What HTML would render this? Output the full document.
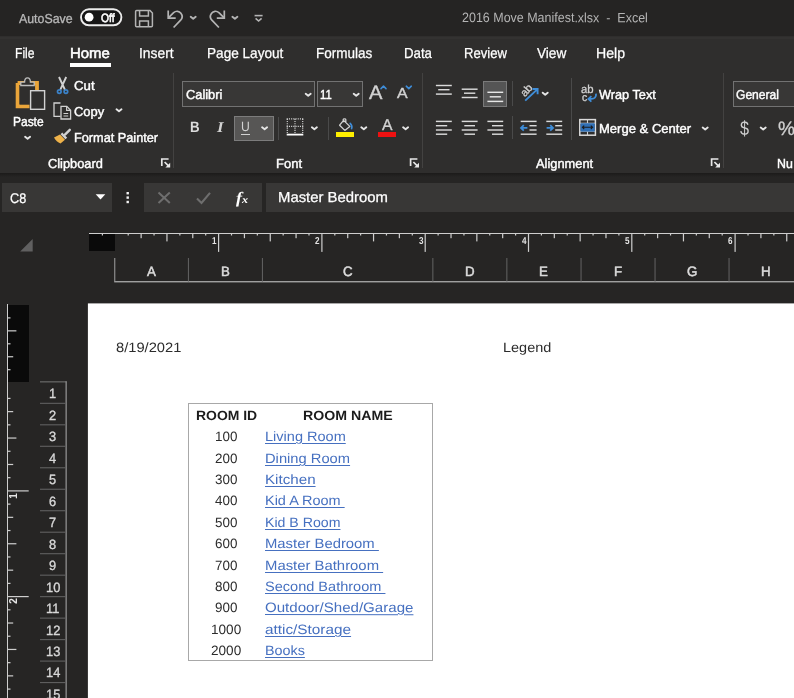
<!DOCTYPE html>
<html><head><meta charset="utf-8"><title>2016 Move Manifest.xlsx - Excel</title>
<style>
html,body{margin:0;padding:0;}
body{width:794px;height:698px;overflow:hidden;background:#262524;position:relative;font-family:"Liberation Sans",sans-serif;}
.t{position:absolute;white-space:pre;transform-origin:0 50%;}
.r{position:absolute;}
svg{position:absolute;left:0;top:0;overflow:visible;}
#app{position:absolute;left:0;top:0;width:794px;height:698px;overflow:hidden;will-change:transform;}
</style></head><body>
<div id="app">
<div class="r" style="left:0px;top:0px;width:794px;height:36px;background:#252423;"></div>
<div class="r" style="left:0px;top:36px;width:794px;height:137px;background:#2f2e2d;"></div>
<div class="r" style="left:0px;top:36.5px;width:794px;height:2px;background:#333231;"></div>
<div class="r" style="left:0px;top:172.5px;width:794px;height:526px;background:#262524;"></div>
<div class="r" style="left:0;top:172.5px;width:794px;height:4px;background:linear-gradient(#1c1b1a,#262524)"></div>
<span class="t" style="left:19.40px;top:9.50px;font-size:13px;line-height:17px;color:#b8b8b8;transform:scaleX(0.9508) rotate(0.06deg);-webkit-text-stroke:0.3px #b8b8b8;">AutoSave</span>
<svg width="794" height="698" viewBox="0 0 794 698"><rect x="81" y="9.3" width="40.4" height="16" rx="8" ry="8" fill="#161616" stroke="#ececec" stroke-width="1.9"/></svg>
<svg width="794" height="698" viewBox="0 0 794 698"><circle cx="89.1" cy="17.2" r="4.4" fill="#fff"/></svg>
<span class="t" style="left:101.00px;top:9.74px;font-size:12px;line-height:16px;color:#ffffff;transform:scaleX(0.8616) rotate(0.06deg);-webkit-text-stroke:0.6px #fff;">Off</span>
<span class="t" style="left:461.80px;top:8.92px;font-size:13.5px;line-height:18px;color:#b4b4b4;transform:scaleX(0.9245) rotate(0.06deg);">2016 Move Manifest.xlsx  -  Excel</span>
<svg width="794" height="698" viewBox="0 0 794 698"><g fill="none" stroke="#b4b4b4" stroke-width="1.5"><path d="M135.6 11.5 a1 1 0 0 1 1 -1 H150 L152.4 13 V25.8 a1 1 0 0 1 -1 1 H136.6 a1 1 0 0 1 -1 -1 Z"/><path d="M139.6 10.6 V16 H148.4 V10.6 M139.6 26.8 V21 H148.4 V26.8"/><path d="M168.2 10.6 V18.1 H175.7" stroke-width="1.7"/><path d="M168.6 17.6 L173.6 12.6 C176 10.6 179.2 10.9 180.9 13.2 C182.6 15.4 182.3 18.3 180.6 20.2 L173.6 27.5" stroke-width="1.7"/><path d="M224.3 10.6 V18.1 H216.8" stroke-width="1.7"/><path d="M223.9 17.6 L218.9 12.6 C216.5 10.6 213.3 10.9 211.6 13.2 C209.9 15.4 210.2 18.3 211.9 20.2 L218.9 27.5" stroke-width="1.7"/><path d="M254.6 15.6 H262.6" stroke-width="1.6"/><path d="M255.6 18.3 L258.6 21 L261.6 18.3" stroke-width="1.6"/></g></svg>
<span class="t" style="left:15.30px;top:44.08px;font-size:14.5px;line-height:19px;color:#ffffff;transform:scaleX(0.8346) rotate(0.06deg);-webkit-text-stroke:0.25px #fff;">File</span>
<span class="t" style="left:70.20px;top:44.08px;font-size:14.5px;line-height:19px;color:#ffffff;transform:scaleX(1.0290) rotate(0.06deg);-webkit-text-stroke:0.55px #fff;">Home</span>
<span class="t" style="left:139.20px;top:44.08px;font-size:14.5px;line-height:19px;color:#ffffff;transform:scaleX(0.9541) rotate(0.06deg);-webkit-text-stroke:0.25px #fff;">Insert</span>
<span class="t" style="left:207.10px;top:44.08px;font-size:14.5px;line-height:19px;color:#ffffff;transform:scaleX(0.9382) rotate(0.06deg);-webkit-text-stroke:0.25px #fff;">Page Layout</span>
<span class="t" style="left:315.90px;top:44.08px;font-size:14.5px;line-height:19px;color:#ffffff;transform:scaleX(0.9316) rotate(0.06deg);-webkit-text-stroke:0.25px #fff;">Formulas</span>
<span class="t" style="left:404.10px;top:44.08px;font-size:14.5px;line-height:19px;color:#ffffff;transform:scaleX(0.9142) rotate(0.06deg);-webkit-text-stroke:0.25px #fff;">Data</span>
<span class="t" style="left:464.30px;top:44.08px;font-size:14.5px;line-height:19px;color:#ffffff;transform:scaleX(0.9023) rotate(0.06deg);-webkit-text-stroke:0.25px #fff;">Review</span>
<span class="t" style="left:536.70px;top:44.08px;font-size:14.5px;line-height:19px;color:#ffffff;transform:scaleX(0.9401) rotate(0.06deg);-webkit-text-stroke:0.25px #fff;">View</span>
<span class="t" style="left:595.70px;top:44.08px;font-size:14.5px;line-height:19px;color:#ffffff;transform:scaleX(0.9724) rotate(0.06deg);-webkit-text-stroke:0.25px #fff;">Help</span>
<div class="r" style="left:70px;top:63px;width:41px;height:3.6px;background:#ffffff;"></div>
<span class="t" style="left:12.80px;top:113.00px;font-size:13px;line-height:17px;color:#ffffff;transform:scaleX(0.9205) rotate(0.06deg);-webkit-text-stroke:0.42px #fff;">Paste</span>
<span class="t" style="left:73.90px;top:77.20px;font-size:13px;line-height:17px;color:#ffffff;transform:scaleX(1.0183) rotate(0.06deg);-webkit-text-stroke:0.42px #fff;">Cut</span>
<span class="t" style="left:73.90px;top:103.20px;font-size:13px;line-height:17px;color:#ffffff;transform:scaleX(0.9951) rotate(0.06deg);-webkit-text-stroke:0.42px #fff;">Copy</span>
<span class="t" style="left:73.90px;top:128.80px;font-size:13px;line-height:17px;color:#ffffff;transform:scaleX(0.9782) rotate(0.06deg);-webkit-text-stroke:0.42px #fff;">Format Painter</span>
<span class="t" style="left:48.30px;top:154.70px;font-size:13px;line-height:17px;color:#ffffff;transform:scaleX(0.9848) rotate(0.06deg);-webkit-text-stroke:0.42px #fff;">Clipboard</span>
<span class="t" style="left:275.80px;top:154.60px;font-size:13px;line-height:17px;color:#ffffff;transform:scaleX(0.9995) rotate(0.06deg);-webkit-text-stroke:0.42px #fff;">Font</span>
<span class="t" style="left:535.60px;top:154.60px;font-size:13px;line-height:17px;color:#ffffff;transform:scaleX(0.9877) rotate(0.06deg);-webkit-text-stroke:0.42px #fff;">Alignment</span>
<span class="t" style="left:777.00px;top:154.60px;font-size:13px;line-height:17px;color:#ffffff;transform:scaleX(0.9507) rotate(0.06deg);-webkit-text-stroke:0.42px #fff;">Nu</span>
<span class="t" style="left:598.80px;top:86.30px;font-size:13px;line-height:17px;color:#ffffff;transform:scaleX(0.9786) rotate(0.06deg);-webkit-text-stroke:0.42px #fff;">Wrap Text</span>
<span class="t" style="left:598.80px;top:120.00px;font-size:13px;line-height:17px;color:#ffffff;transform:scaleX(1.0026) rotate(0.06deg);-webkit-text-stroke:0.42px #fff;">Merge &amp; Center</span>
<div class="r" style="left:173px;top:72.5px;width:1px;height:95.5px;background:#434241;"></div>
<div class="r" style="left:422px;top:72.5px;width:1px;height:95.5px;background:#434241;"></div>
<div class="r" style="left:723px;top:72.5px;width:1px;height:95.5px;background:#434241;"></div>
<div class="r" style="left:278px;top:116.5px;width:1px;height:23px;background:#4a4a4a;"></div>
<div class="r" style="left:328px;top:116.5px;width:1px;height:23px;background:#4a4a4a;"></div>
<div class="r" style="left:512px;top:81px;width:1px;height:25px;background:#4a4a4a;"></div>
<div class="r" style="left:512px;top:116px;width:1px;height:23px;background:#4a4a4a;"></div>
<div class="r" style="left:571px;top:78px;width:1px;height:62px;background:#4a4a4a;"></div>
<div class="r" style="left:182px;top:81px;width:132.5px;height:25.5px;border:1px solid #727272;background:#383736;box-sizing:border-box"></div>
<div class="r" style="left:317px;top:81px;width:46px;height:25.5px;border:1px solid #727272;background:#383736;box-sizing:border-box"></div>
<div class="r" style="left:732.5px;top:81px;width:70px;height:25.5px;border:1px solid #727272;background:#383736;box-sizing:border-box"></div>
<span class="t" style="left:185.80px;top:85.80px;font-size:13px;line-height:17px;color:#ffffff;transform:scaleX(0.9880) rotate(0.06deg);-webkit-text-stroke:0.42px #fff;">Calibri</span>
<span class="t" style="left:320.30px;top:85.80px;font-size:13px;line-height:17px;color:#ffffff;transform:scaleX(0.8669) rotate(0.06deg);-webkit-text-stroke:0.42px #fff;">11</span>
<span class="t" style="left:735.90px;top:85.80px;font-size:13px;line-height:17px;color:#ffffff;transform:scaleX(0.9276) rotate(0.06deg);-webkit-text-stroke:0.42px #fff;">General</span>
<div class="r" style="left:234px;top:115.5px;width:40px;height:25.5px;border:1px solid #7c7c7c;background:#575655;box-sizing:border-box"></div>
<div class="r" style="left:482.8px;top:81px;width:24.6px;height:25.6px;border:1px solid #7a7a7a;background:#555;box-sizing:border-box"></div>
<span class="t" style="left:190.10px;top:117.20px;font-size:15px;line-height:20px;color:#dcdcdc;transform:scaleX(0.8862) rotate(0.06deg);font-weight:bold;">B</span>
<span class="t" style="left:216.80px;top:117.14px;font-size:15px;line-height:20px;color:#d2d2d2;transform:scaleX(1.1307) rotate(0.06deg);font-weight:bold;font-style:italic;font-family:'Liberation Serif',serif;">I</span>
<span class="t" style="left:241.40px;top:117.92px;font-size:13.5px;line-height:18px;color:#d2d2d2;transform:scaleX(0.9026) rotate(0.06deg);">U</span>
<div class="r" style="left:241.2px;top:133.6px;width:9.3px;height:1.2px;background:#d2d2d2;"></div>
<span class="t" style="left:369.00px;top:79.64px;font-size:19.5px;line-height:25px;color:#d2d2d2;transform:scaleX(1.0302) rotate(0.06deg);-webkit-text-stroke:0.4px #d2d2d2;">A</span>
<span class="t" style="left:396.70px;top:84.38px;font-size:14.5px;line-height:19px;color:#d2d2d2;transform:scaleX(1.0960) rotate(0.06deg);-webkit-text-stroke:0.4px #d2d2d2;">A</span>
<span class="t" style="left:382.00px;top:114.93px;font-size:15.5px;line-height:20px;color:#d2d2d2;transform:scaleX(1.0156) rotate(0.06deg);-webkit-text-stroke:0.3px #d2d2d2;">A</span>
<div class="r" style="left:336px;top:132px;width:17.7px;height:4.8px;background:#ffee00;"></div>
<div class="r" style="left:378px;top:132px;width:18px;height:4.8px;background:#ee1111;"></div>
<span class="t" style="left:739.60px;top:114.67px;font-size:20px;line-height:26px;color:#d0d0d0;transform:scaleX(0.8091) rotate(0.06deg);">$</span>
<span class="t" style="left:778.00px;top:116.24px;font-size:19.5px;line-height:25px;color:#d0d0d0;transform:scaleX(0.9805) rotate(0.06deg);-webkit-text-stroke:0.3px #d0d0d0;">%</span>
<svg width="794" height="698" viewBox="0 0 794 698"><polyline points="190.70,16.80 193.20,18.80 195.70,16.80" fill="none" stroke="#b4b4b4" stroke-width="1.9" stroke-linecap="round" stroke-linejoin="round"/></svg>
<svg width="794" height="698" viewBox="0 0 794 698"><polyline points="232.40,16.80 234.90,18.80 237.40,16.80" fill="none" stroke="#b4b4b4" stroke-width="1.9" stroke-linecap="round" stroke-linejoin="round"/></svg>
<svg width="794" height="698" viewBox="0 0 794 698"><polyline points="25.10,136.80 27.60,138.80 30.10,136.80" fill="none" stroke="#e6e6e6" stroke-width="1.9" stroke-linecap="round" stroke-linejoin="round"/></svg>
<svg width="794" height="698" viewBox="0 0 794 698"><polyline points="116.50,109.30 119.00,111.30 121.50,109.30" fill="none" stroke="#e6e6e6" stroke-width="1.9" stroke-linecap="round" stroke-linejoin="round"/></svg>
<svg width="794" height="698" viewBox="0 0 794 698"><polyline points="305.70,93.80 308.20,95.80 310.70,93.80" fill="none" stroke="#e6e6e6" stroke-width="1.9" stroke-linecap="round" stroke-linejoin="round"/></svg>
<svg width="794" height="698" viewBox="0 0 794 698"><polyline points="353.70,93.80 356.20,95.80 358.70,93.80" fill="none" stroke="#e6e6e6" stroke-width="1.9" stroke-linecap="round" stroke-linejoin="round"/></svg>
<svg width="794" height="698" viewBox="0 0 794 698"><polyline points="262.10,127.30 264.60,129.30 267.10,127.30" fill="none" stroke="#e6e6e6" stroke-width="1.9" stroke-linecap="round" stroke-linejoin="round"/></svg>
<svg width="794" height="698" viewBox="0 0 794 698"><polyline points="311.90,127.30 314.40,129.30 316.90,127.30" fill="none" stroke="#e6e6e6" stroke-width="1.9" stroke-linecap="round" stroke-linejoin="round"/></svg>
<svg width="794" height="698" viewBox="0 0 794 698"><polyline points="361.30,127.30 363.80,129.30 366.30,127.30" fill="none" stroke="#e6e6e6" stroke-width="1.9" stroke-linecap="round" stroke-linejoin="round"/></svg>
<svg width="794" height="698" viewBox="0 0 794 698"><polyline points="403.10,127.30 405.60,129.30 408.10,127.30" fill="none" stroke="#e6e6e6" stroke-width="1.9" stroke-linecap="round" stroke-linejoin="round"/></svg>
<svg width="794" height="698" viewBox="0 0 794 698"><polyline points="542.70,92.70 545.20,94.70 547.70,92.70" fill="none" stroke="#e6e6e6" stroke-width="1.9" stroke-linecap="round" stroke-linejoin="round"/></svg>
<svg width="794" height="698" viewBox="0 0 794 698"><polyline points="702.70,127.50 705.20,129.50 707.70,127.50" fill="none" stroke="#e6e6e6" stroke-width="1.9" stroke-linecap="round" stroke-linejoin="round"/></svg>
<svg width="794" height="698" viewBox="0 0 794 698"><polyline points="760.70,127.50 763.20,129.50 765.70,127.50" fill="none" stroke="#e6e6e6" stroke-width="1.9" stroke-linecap="round" stroke-linejoin="round"/></svg>
<svg width="794" height="698" viewBox="0 0 794 698"><g fill="none" stroke="#3f8dd8" stroke-width="1.6" stroke-linecap="round" stroke-linejoin="round"><polyline points="381,88.6 383.5,86.2 386,88.6"/><polyline points="406.3,86.2 408.8,88.6 411.3,86.2"/></g></svg>
<svg width="794" height="698" viewBox="0 0 794 698"><path d="M17.6 83 H37 V90 M17.6 83 V106.3 H29.5" fill="none" stroke="#eaa53a" stroke-width="3.8" stroke-linejoin="miter"/><rect x="19.6" y="85" width="15.4" height="19.4" fill="#2f2e2d"/><path d="M20.8 85.5 V82.2 H24.6 C24.6 79.4 25.8 77.8 27.5 77.8 C29.2 77.8 30.4 79.4 30.4 82.2 H34.2 V85.5 Z" fill="#2f2e2d" stroke="#bdbdbd" stroke-width="1.3"/><rect x="30.6" y="90.7" width="14" height="18.6" fill="#2f2e2d" stroke="#d2d2d2" stroke-width="1.4"/><path d="M59 77 L65 89.8 M66.2 77 L60.2 89.8" stroke="#d2d2d2" stroke-width="1.9" fill="none"/><circle cx="59.3" cy="91.6" r="1.8" fill="none" stroke="#3b82c8" stroke-width="1.7"/><circle cx="65.9" cy="91.6" r="1.8" fill="none" stroke="#3b82c8" stroke-width="1.7"/><path d="M60.5 103 H54 V116.3 H60.5" fill="none" stroke="#d2d2d2" stroke-width="1.3"/><path d="M61 106.3 H66.8 L70.6 110.2 V119 H61 Z" fill="#2f2e2d" stroke="#d2d2d2" stroke-width="1.3"/><path d="M66.6 106.5 V110.4 H70.4 M63.5 113.5 H68.2 M63.5 116 H68.2" fill="none" stroke="#d2d2d2" stroke-width="1.1"/><path d="M69.8 129.8 L65 134.6" stroke="#d2d2d2" stroke-width="2.4" stroke-linecap="round" fill="none"/><path d="M62.2 132.6 L67.2 137.8 L65.4 139.2 L60.6 134.2 Z" fill="#d2d2d2"/><path d="M60 134.6 L65 139.8 L60.5 143.4 C58 142.6 55.4 140.4 54 137.6 Z" fill="#eeb24a"/></svg>
<svg width="794" height="698" viewBox="0 0 794 698"><path d="M287.3 118.8 V134" stroke="#d2d2d2" stroke-width="1.2" stroke-dasharray="1.1 1.1" fill="none"/><path d="M295 118.8 V134" stroke="#d2d2d2" stroke-width="1.2" stroke-dasharray="1.1 1.1" fill="none"/><path d="M302.7 118.8 V134" stroke="#d2d2d2" stroke-width="1.2" stroke-dasharray="1.1 1.1" fill="none"/><path d="M286.7 118.9 H303.3" stroke="#d2d2d2" stroke-width="1.2" stroke-dasharray="1.1 1.1" fill="none"/><path d="M286.7 126.4 H303.3" stroke="#d2d2d2" stroke-width="1.2" stroke-dasharray="1.1 1.1" fill="none"/><path d="M286.7 134.6 H303.3" stroke="#ffffff" stroke-width="1.8" fill="none"/><path d="M343.6 120.4 L349.8 126.4 L344.8 130.4 L339.6 125.2 Z M343.2 122.2 V119.6 C343.2 118.6 345.8 118.6 345.8 119.6 V122" fill="none" stroke="#d2d2d2" stroke-width="1.3" stroke-linejoin="round"/><path d="M350.2 123.4 C351.8 125 352.4 126.6 351.6 128.6" fill="none" stroke="#3f8dd8" stroke-width="1.6" stroke-linecap="round"/></svg>
<svg width="794" height="698" viewBox="0 0 794 698"><path d="M435.9 85.5 H451.8" stroke="#dadada" stroke-width="1.45" fill="none"/><path d="M438.2 89.7 H449.5" stroke="#dadada" stroke-width="1.45" fill="none"/><path d="M435.9 94.1 H451.8" stroke="#dadada" stroke-width="1.45" fill="none"/><path d="M461.7 89.2 H477.6" stroke="#dadada" stroke-width="1.45" fill="none"/><path d="M464 93.2 H475.3" stroke="#dadada" stroke-width="1.45" fill="none"/><path d="M461.7 97.5 H477.6" stroke="#dadada" stroke-width="1.45" fill="none"/><path d="M487.4 92.3 H503.2" stroke="#e6e6e6" stroke-width="1.45" fill="none"/><path d="M489.7 96.8 H500.9" stroke="#e6e6e6" stroke-width="1.45" fill="none"/><path d="M487.4 101.4 H503.2" stroke="#e6e6e6" stroke-width="1.45" fill="none"/><path d="M435.9 121.4 H451.8" stroke="#dadada" stroke-width="1.45" fill="none"/><path d="M435.9 125.7 H447.2" stroke="#dadada" stroke-width="1.45" fill="none"/><path d="M435.9 130 H451.8" stroke="#dadada" stroke-width="1.45" fill="none"/><path d="M435.9 134.2 H447.2" stroke="#dadada" stroke-width="1.45" fill="none"/><path d="M461.7 121.4 H477.6" stroke="#dadada" stroke-width="1.45" fill="none"/><path d="M464.3 125.7 H475" stroke="#dadada" stroke-width="1.45" fill="none"/><path d="M461.7 130 H477.6" stroke="#dadada" stroke-width="1.45" fill="none"/><path d="M464.3 134.2 H475" stroke="#dadada" stroke-width="1.45" fill="none"/><path d="M487.4 121.4 H503.2" stroke="#dadada" stroke-width="1.45" fill="none"/><path d="M492 125.7 H503.2" stroke="#dadada" stroke-width="1.45" fill="none"/><path d="M487.4 130 H503.2" stroke="#dadada" stroke-width="1.45" fill="none"/><path d="M492 134.2 H503.2" stroke="#dadada" stroke-width="1.45" fill="none"/><path d="M520.7 121.4 H536.6" stroke="#dadada" stroke-width="1.45" fill="none"/><path d="M529.5 125.7 H536.6" stroke="#dadada" stroke-width="1.45" fill="none"/><path d="M529.5 130 H536.6" stroke="#dadada" stroke-width="1.45" fill="none"/><path d="M520.7 134.2 H536.6" stroke="#dadada" stroke-width="1.45" fill="none"/><path d="M546.3 121.4 H562.2" stroke="#dadada" stroke-width="1.45" fill="none"/><path d="M555.2 125.7 H562.2" stroke="#dadada" stroke-width="1.45" fill="none"/><path d="M555.2 130 H562.2" stroke="#dadada" stroke-width="1.45" fill="none"/><path d="M546.3 134.2 H562.2" stroke="#dadada" stroke-width="1.45" fill="none"/><path d="M527.4 127.9 H521.2 M523.8 125.2 L521 127.9 L523.8 130.6" stroke="#3f8dd8" stroke-width="1.8" fill="none"/><path d="M546.6 127.9 H552.8 M550.2 125.2 L553 127.9 L550.2 130.6" stroke="#3f8dd8" stroke-width="1.8" fill="none"/><path d="M525.2 100.6 L537 89.6 M532.4 89 H537.6 V94.2" stroke="#3f8dd8" stroke-width="1.9" fill="none"/><path d="M596 93.6 C596.4 97 594.6 98.9 591.6 98.9 H588.6 M591.4 96.2 L588.4 98.9 L591.4 101.6" stroke="#3f8dd8" stroke-width="1.8" fill="none"/><rect x="579.8" y="119.6" width="15.6" height="15.6" fill="none" stroke="#dcdcdc" stroke-width="1.5"/><path d="M587.5 119.6 V123 M587.5 131.6 V135 M579.8 123.4 H595.2 M579.8 131.2 H595.2" stroke="#d2d2d2" stroke-width="1.1" fill="none"/><rect x="580.5" y="123.2" width="14.2" height="8.4" fill="#2f6fb5"/><path d="M582.4 127.3 H592.6 M584.2 125.6 L582.4 127.3 L584.2 129 M590.8 125.6 L592.6 127.3 L590.8 129" stroke="#1c1c1c" stroke-width="1.1" fill="none"/></svg>
<span class="t" style="left:519.6px;top:84.2px;font-size:11px;line-height:12px;color:#d2d2d2;-webkit-text-stroke:0.3px #d2d2d2;transform:rotate(-48deg);transform-origin:50% 50%;">ab</span>
<span class="t" style="left:581.40px;top:81.92px;font-size:11.5px;line-height:15px;color:#d2d2d2;transform:scaleX(0.9850) rotate(0.06deg);-webkit-text-stroke:0.3px #d2d2d2;">ab</span>
<span class="t" style="left:581.60px;top:90.09px;font-size:11px;line-height:14px;color:#d2d2d2;transform:scaleX(0.9455) rotate(0.06deg);-webkit-text-stroke:0.3px #d2d2d2;">c</span>
<svg width="794" height="698" viewBox="0 0 794 698"><path d="M161.8 166.0 V159.0 H168.6" stroke="#e8e8e8" stroke-width="1.7" fill="none"/><path d="M164.6 162.0 L169 166.4" stroke="#e8e8e8" stroke-width="1.7" fill="none"/><path d="M170.2 162.8 V167.6 H165.4 Z" fill="#e8e8e8"/></svg>
<svg width="794" height="698" viewBox="0 0 794 698"><path d="M410.6 166.0 V159.0 H417.40000000000003" stroke="#e8e8e8" stroke-width="1.7" fill="none"/><path d="M413.40000000000003 162.0 L417.8 166.4" stroke="#e8e8e8" stroke-width="1.7" fill="none"/><path d="M419.0 162.8 V167.6 H414.2 Z" fill="#e8e8e8"/></svg>
<svg width="794" height="698" viewBox="0 0 794 698"><path d="M711.5999999999999 166.0 V159.0 H718.4" stroke="#e8e8e8" stroke-width="1.7" fill="none"/><path d="M714.4 162.0 L718.8 166.4" stroke="#e8e8e8" stroke-width="1.7" fill="none"/><path d="M720.0 162.8 V167.6 H715.1999999999999 Z" fill="#e8e8e8"/></svg>
<div class="r" style="left:2px;top:183.3px;width:110px;height:28.6px;background:#383736;"></div>
<div class="r" style="left:144px;top:183.3px;width:118.3px;height:28.6px;background:#383736;"></div>
<div class="r" style="left:265.5px;top:183.3px;width:529px;height:28.6px;background:#383736;"></div>
<span class="t" style="left:10.00px;top:188.95px;font-size:14px;line-height:18px;color:#ffffff;transform:scaleX(0.9052) rotate(0.06deg);-webkit-text-stroke:0.25px #fff;">C8</span>
<span class="t" style="left:278.40px;top:188.28px;font-size:14.5px;line-height:19px;color:#ffffff;transform:scaleX(1.0263) rotate(0.06deg);-webkit-text-stroke:0.25px #fff;">Master Bedroom</span>
<svg width="794" height="698" viewBox="0 0 794 698"><polygon points="95.7,194.2 105.3,194.2 100.5,199.4" fill="#fff"/><rect x="126.5" y="192" width="2.4" height="2.4" fill="#f4f4f4"/><rect x="126.5" y="196.4" width="2.4" height="2.4" fill="#f4f4f4"/><rect x="126.5" y="200.8" width="2.4" height="2.4" fill="#f4f4f4"/><path d="M158.5 192.5 L169.8 203 M169.8 192.5 L158.5 203" stroke="#6e6e6e" stroke-width="2" fill="none"/><path d="M197 198.5 L201.5 203 L210 192.8" stroke="#6e6e6e" stroke-width="2.1" fill="none"/></svg>
<span class="t" style="left:235.60px;top:186.70px;font-size:16px;line-height:21px;color:#ffffff;transform:scaleX(1.1260) rotate(0.06deg);font-weight:bold;font-style:italic;font-family:'Liberation Serif',serif;">f</span>
<span class="t" style="left:241.80px;top:193.06px;font-size:10.5px;line-height:14px;color:#ffffff;transform:scaleX(1.1429) rotate(0.06deg);font-weight:bold;font-style:italic;font-family:'Liberation Serif',serif;">x</span>
<svg width="794" height="698" viewBox="0 0 794 698"><polygon points="32.7,239 32.7,251.6 20.2,251.6" fill="#606060"/></svg>
<div class="r" style="left:89.2px;top:234px;width:25.5px;height:17.4px;background:#0a0a0a;"></div>
<div class="r" style="left:89.2px;top:232.6px;width:705px;height:1.3px;background:#cecece;"></div>
<svg width="794" height="698" viewBox="0 0 794 698"><rect x="101.79" y="233.4" width="1.2" height="2.1" fill="#cecece"/><rect x="127.61" y="233.4" width="1.2" height="2.1" fill="#cecece"/><rect x="140.53" y="233.4" width="1.2" height="4.8" fill="#cecece"/><rect x="153.44" y="233.4" width="1.2" height="2.1" fill="#cecece"/><rect x="166.35" y="233.4" width="1.2" height="8" fill="#cecece"/><rect x="179.26" y="233.4" width="1.2" height="2.1" fill="#cecece"/><rect x="192.17" y="233.4" width="1.2" height="4.8" fill="#cecece"/><rect x="205.09" y="233.4" width="1.2" height="2.1" fill="#cecece"/><rect x="218.00" y="233.4" width="1.2" height="18.5" fill="#cecece"/><rect x="230.91" y="233.4" width="1.2" height="2.1" fill="#cecece"/><rect x="243.83" y="233.4" width="1.2" height="4.8" fill="#cecece"/><rect x="256.74" y="233.4" width="1.2" height="2.1" fill="#cecece"/><rect x="269.65" y="233.4" width="1.2" height="8" fill="#cecece"/><rect x="282.56" y="233.4" width="1.2" height="2.1" fill="#cecece"/><rect x="295.47" y="233.4" width="1.2" height="4.8" fill="#cecece"/><rect x="308.39" y="233.4" width="1.2" height="2.1" fill="#cecece"/><rect x="321.30" y="233.4" width="1.2" height="18.5" fill="#cecece"/><rect x="334.21" y="233.4" width="1.2" height="2.1" fill="#cecece"/><rect x="347.12" y="233.4" width="1.2" height="4.8" fill="#cecece"/><rect x="360.04" y="233.4" width="1.2" height="2.1" fill="#cecece"/><rect x="372.95" y="233.4" width="1.2" height="8" fill="#cecece"/><rect x="385.86" y="233.4" width="1.2" height="2.1" fill="#cecece"/><rect x="398.77" y="233.4" width="1.2" height="4.8" fill="#cecece"/><rect x="411.69" y="233.4" width="1.2" height="2.1" fill="#cecece"/><rect x="424.60" y="233.4" width="1.2" height="18.5" fill="#cecece"/><rect x="437.51" y="233.4" width="1.2" height="2.1" fill="#cecece"/><rect x="450.42" y="233.4" width="1.2" height="4.8" fill="#cecece"/><rect x="463.34" y="233.4" width="1.2" height="2.1" fill="#cecece"/><rect x="476.25" y="233.4" width="1.2" height="8" fill="#cecece"/><rect x="489.16" y="233.4" width="1.2" height="2.1" fill="#cecece"/><rect x="502.07" y="233.4" width="1.2" height="4.8" fill="#cecece"/><rect x="514.99" y="233.4" width="1.2" height="2.1" fill="#cecece"/><rect x="527.90" y="233.4" width="1.2" height="18.5" fill="#cecece"/><rect x="540.81" y="233.4" width="1.2" height="2.1" fill="#cecece"/><rect x="553.72" y="233.4" width="1.2" height="4.8" fill="#cecece"/><rect x="566.64" y="233.4" width="1.2" height="2.1" fill="#cecece"/><rect x="579.55" y="233.4" width="1.2" height="8" fill="#cecece"/><rect x="592.46" y="233.4" width="1.2" height="2.1" fill="#cecece"/><rect x="605.38" y="233.4" width="1.2" height="4.8" fill="#cecece"/><rect x="618.29" y="233.4" width="1.2" height="2.1" fill="#cecece"/><rect x="631.20" y="233.4" width="1.2" height="18.5" fill="#cecece"/><rect x="644.11" y="233.4" width="1.2" height="2.1" fill="#cecece"/><rect x="657.02" y="233.4" width="1.2" height="4.8" fill="#cecece"/><rect x="669.94" y="233.4" width="1.2" height="2.1" fill="#cecece"/><rect x="682.85" y="233.4" width="1.2" height="8" fill="#cecece"/><rect x="695.76" y="233.4" width="1.2" height="2.1" fill="#cecece"/><rect x="708.67" y="233.4" width="1.2" height="4.8" fill="#cecece"/><rect x="721.59" y="233.4" width="1.2" height="2.1" fill="#cecece"/><rect x="734.50" y="233.4" width="1.2" height="18.5" fill="#cecece"/><rect x="747.41" y="233.4" width="1.2" height="2.1" fill="#cecece"/><rect x="760.32" y="233.4" width="1.2" height="4.8" fill="#cecece"/><rect x="773.24" y="233.4" width="1.2" height="2.1" fill="#cecece"/><rect x="786.15" y="233.4" width="1.2" height="8" fill="#cecece"/></svg>
<span class="t" style="left:211.90px;top:234.03px;font-size:10px;line-height:13px;color:#e4e4e4;transform:scaleX(0.8091) rotate(0.06deg);font-weight:bold;">1</span>
<span class="t" style="left:315.20px;top:234.03px;font-size:10px;line-height:13px;color:#e4e4e4;transform:scaleX(0.8091) rotate(0.06deg);font-weight:bold;">2</span>
<span class="t" style="left:418.50px;top:234.03px;font-size:10px;line-height:13px;color:#e4e4e4;transform:scaleX(0.8091) rotate(0.06deg);font-weight:bold;">3</span>
<span class="t" style="left:521.80px;top:234.03px;font-size:10px;line-height:13px;color:#e4e4e4;transform:scaleX(0.8091) rotate(0.06deg);font-weight:bold;">4</span>
<span class="t" style="left:625.10px;top:234.03px;font-size:10px;line-height:13px;color:#e4e4e4;transform:scaleX(0.8091) rotate(0.06deg);font-weight:bold;">5</span>
<span class="t" style="left:728.40px;top:234.03px;font-size:10px;line-height:13px;color:#e4e4e4;transform:scaleX(0.8091) rotate(0.06deg);font-weight:bold;">6</span>
<svg width="794" height="698" viewBox="0 0 794 698"><rect x="114.2" y="281.05" width="680" height="1.35" fill="#a6a6a6"/></svg>
<svg width="794" height="698" viewBox="0 0 794 698"><rect x="114.20" y="258" width="1.1" height="23.5" fill="#969696"/></svg>
<span class="t" style="left:147.11px;top:262.59px;font-size:13.6px;line-height:18px;color:#dcdcdc;transform:scaleX(0.9779) rotate(0.06deg);-webkit-text-stroke:0.5px #dcdcdc;">A</span>
<svg width="794" height="698" viewBox="0 0 794 698"><rect x="187.90" y="258" width="1.1" height="23.5" fill="#5e5e5e"/></svg>
<span class="t" style="left:220.96px;top:262.59px;font-size:13.6px;line-height:18px;color:#dcdcdc;transform:scaleX(0.9779) rotate(0.06deg);-webkit-text-stroke:0.5px #dcdcdc;">B</span>
<svg width="794" height="698" viewBox="0 0 794 698"><rect x="261.90" y="258" width="1.1" height="23.5" fill="#5e5e5e"/></svg>
<span class="t" style="left:342.80px;top:262.59px;font-size:13.6px;line-height:18px;color:#dcdcdc;transform:scaleX(0.9779) rotate(0.06deg);-webkit-text-stroke:0.5px #dcdcdc;">C</span>
<svg width="794" height="698" viewBox="0 0 794 698"><rect x="432.30" y="258" width="1.1" height="23.5" fill="#5e5e5e"/></svg>
<span class="t" style="left:465.00px;top:262.59px;font-size:13.6px;line-height:18px;color:#dcdcdc;transform:scaleX(0.9779) rotate(0.06deg);-webkit-text-stroke:0.5px #dcdcdc;">D</span>
<svg width="794" height="698" viewBox="0 0 794 698"><rect x="506.30" y="258" width="1.1" height="23.5" fill="#5e5e5e"/></svg>
<span class="t" style="left:539.46px;top:262.59px;font-size:13.6px;line-height:18px;color:#dcdcdc;transform:scaleX(0.9779) rotate(0.06deg);-webkit-text-stroke:0.5px #dcdcdc;">E</span>
<svg width="794" height="698" viewBox="0 0 794 698"><rect x="580.50" y="258" width="1.1" height="23.5" fill="#5e5e5e"/></svg>
<span class="t" style="left:613.94px;top:262.59px;font-size:13.6px;line-height:18px;color:#dcdcdc;transform:scaleX(0.9779) rotate(0.06deg);-webkit-text-stroke:0.5px #dcdcdc;">F</span>
<svg width="794" height="698" viewBox="0 0 794 698"><rect x="654.50" y="258" width="1.1" height="23.5" fill="#5e5e5e"/></svg>
<span class="t" style="left:686.83px;top:262.59px;font-size:13.6px;line-height:18px;color:#dcdcdc;transform:scaleX(0.9779) rotate(0.06deg);-webkit-text-stroke:0.5px #dcdcdc;">G</span>
<svg width="794" height="698" viewBox="0 0 794 698"><rect x="728.50" y="258" width="1.1" height="23.5" fill="#5e5e5e"/></svg>
<span class="t" style="left:761.20px;top:262.59px;font-size:13.6px;line-height:18px;color:#dcdcdc;transform:scaleX(0.9779) rotate(0.06deg);-webkit-text-stroke:0.5px #dcdcdc;">H</span>
<svg width="794" height="698" viewBox="0 0 794 698"><rect x="87.9" y="303.4" width="707" height="395" fill="#fff"/></svg>
<div class="r" style="left:8.2px;top:304.5px;width:20.8px;height:77.3px;background:#0a0a0a;"></div>
<div class="r" style="left:6.9px;top:304.3px;width:1.2px;height:394px;background:#cecece;"></div>
<svg width="794" height="698" viewBox="0 0 794 698"><rect x="7.6" y="317.30" width="2.9000000000000004" height="1.2" fill="#cecece"/><rect x="7.6" y="330.25" width="8.8" height="1.2" fill="#cecece"/><rect x="7.6" y="343.20" width="2.9000000000000004" height="1.2" fill="#cecece"/><rect x="7.6" y="356.15" width="5.6" height="1.2" fill="#cecece"/><rect x="7.6" y="369.10" width="2.9000000000000004" height="1.2" fill="#cecece"/><rect x="7.6" y="397.81" width="2.9000000000000004" height="1.2" fill="#cecece"/><rect x="7.6" y="411.02" width="5.6" height="1.2" fill="#cecece"/><rect x="7.6" y="424.24" width="2.9000000000000004" height="1.2" fill="#cecece"/><rect x="7.6" y="437.45" width="8.8" height="1.2" fill="#cecece"/><rect x="7.6" y="450.66" width="2.9000000000000004" height="1.2" fill="#cecece"/><rect x="7.6" y="463.88" width="5.6" height="1.2" fill="#cecece"/><rect x="7.6" y="477.09" width="2.9000000000000004" height="1.2" fill="#cecece"/><rect x="7.6" y="490.30" width="21.1" height="1.2" fill="#cecece"/><rect x="7.6" y="503.51" width="2.9000000000000004" height="1.2" fill="#cecece"/><rect x="7.6" y="516.73" width="5.6" height="1.2" fill="#cecece"/><rect x="7.6" y="529.94" width="2.9000000000000004" height="1.2" fill="#cecece"/><rect x="7.6" y="543.15" width="8.8" height="1.2" fill="#cecece"/><rect x="7.6" y="556.36" width="2.9000000000000004" height="1.2" fill="#cecece"/><rect x="7.6" y="569.57" width="5.6" height="1.2" fill="#cecece"/><rect x="7.6" y="582.79" width="2.9000000000000004" height="1.2" fill="#cecece"/><rect x="7.6" y="596.00" width="21.1" height="1.2" fill="#cecece"/><rect x="7.6" y="609.21" width="2.9000000000000004" height="1.2" fill="#cecece"/><rect x="7.6" y="622.42" width="5.6" height="1.2" fill="#cecece"/><rect x="7.6" y="635.64" width="2.9000000000000004" height="1.2" fill="#cecece"/><rect x="7.6" y="648.85" width="8.8" height="1.2" fill="#cecece"/><rect x="7.6" y="662.06" width="2.9000000000000004" height="1.2" fill="#cecece"/><rect x="7.6" y="675.27" width="5.6" height="1.2" fill="#cecece"/><rect x="7.6" y="688.49" width="2.9000000000000004" height="1.2" fill="#cecece"/></svg>
<span class="t" style="left:9.5px;top:490.70px;width:8px;height:10px;font-size:10px;line-height:10px;font-weight:bold;color:#e4e4e4;transform:rotate(-90deg);transform-origin:50% 50%;text-align:center;">1</span>
<span class="t" style="left:9.5px;top:596.40px;width:8px;height:10px;font-size:10px;line-height:10px;font-weight:bold;color:#e4e4e4;transform:rotate(-90deg);transform-origin:50% 50%;text-align:center;">2</span>
<svg width="794" height="698" viewBox="0 0 794 698"><rect x="40" y="381.3" width="26.6" height="1.1" fill="#707070"/><rect x="65.5" y="381.3" width="1.3" height="317" fill="#8e8e8e"/><rect x="40" y="402.78" width="25.6" height="1.1" fill="#606060"/><rect x="40" y="424.26" width="25.6" height="1.1" fill="#606060"/><rect x="40" y="445.74" width="25.6" height="1.1" fill="#606060"/><rect x="40" y="467.22" width="25.6" height="1.1" fill="#606060"/><rect x="40" y="488.70" width="25.6" height="1.1" fill="#606060"/><rect x="40" y="510.18" width="25.6" height="1.1" fill="#606060"/><rect x="40" y="531.66" width="25.6" height="1.1" fill="#606060"/><rect x="40" y="553.14" width="25.6" height="1.1" fill="#606060"/><rect x="40" y="574.62" width="25.6" height="1.1" fill="#606060"/><rect x="40" y="596.10" width="25.6" height="1.1" fill="#606060"/><rect x="40" y="617.58" width="25.6" height="1.1" fill="#606060"/><rect x="40" y="639.06" width="25.6" height="1.1" fill="#606060"/><rect x="40" y="660.54" width="25.6" height="1.1" fill="#606060"/><rect x="40" y="682.02" width="25.6" height="1.1" fill="#606060"/><rect x="40" y="703.50" width="25.6" height="1.1" fill="#606060"/></svg>
<span class="t" style="left:48.63px;top:385.25px;font-size:13.5px;line-height:18px;color:#d8d8d8;transform:scaleX(0.9500) rotate(0.06deg);-webkit-text-stroke:0.35px #d8d8d8;">1</span>
<span class="t" style="left:48.63px;top:406.73px;font-size:13.5px;line-height:18px;color:#d8d8d8;transform:scaleX(0.9500) rotate(0.06deg);-webkit-text-stroke:0.35px #d8d8d8;">2</span>
<span class="t" style="left:48.63px;top:428.21px;font-size:13.5px;line-height:18px;color:#d8d8d8;transform:scaleX(0.9500) rotate(0.06deg);-webkit-text-stroke:0.35px #d8d8d8;">3</span>
<span class="t" style="left:48.63px;top:449.69px;font-size:13.5px;line-height:18px;color:#d8d8d8;transform:scaleX(0.9500) rotate(0.06deg);-webkit-text-stroke:0.35px #d8d8d8;">4</span>
<span class="t" style="left:48.63px;top:471.17px;font-size:13.5px;line-height:18px;color:#d8d8d8;transform:scaleX(0.9500) rotate(0.06deg);-webkit-text-stroke:0.35px #d8d8d8;">5</span>
<span class="t" style="left:48.63px;top:492.65px;font-size:13.5px;line-height:18px;color:#d8d8d8;transform:scaleX(0.9500) rotate(0.06deg);-webkit-text-stroke:0.35px #d8d8d8;">6</span>
<span class="t" style="left:48.63px;top:514.13px;font-size:13.5px;line-height:18px;color:#d8d8d8;transform:scaleX(0.9500) rotate(0.06deg);-webkit-text-stroke:0.35px #d8d8d8;">7</span>
<span class="t" style="left:48.63px;top:535.61px;font-size:13.5px;line-height:18px;color:#d8d8d8;transform:scaleX(0.9500) rotate(0.06deg);-webkit-text-stroke:0.35px #d8d8d8;">8</span>
<span class="t" style="left:48.63px;top:557.09px;font-size:13.5px;line-height:18px;color:#d8d8d8;transform:scaleX(0.9500) rotate(0.06deg);-webkit-text-stroke:0.35px #d8d8d8;">9</span>
<span class="t" style="left:45.77px;top:578.57px;font-size:13.5px;line-height:18px;color:#d8d8d8;transform:scaleX(0.9500) rotate(0.06deg);-webkit-text-stroke:0.35px #d8d8d8;">10</span>
<span class="t" style="left:46.24px;top:600.05px;font-size:13.5px;line-height:18px;color:#d8d8d8;transform:scaleX(0.9500) rotate(0.06deg);-webkit-text-stroke:0.35px #d8d8d8;">11</span>
<span class="t" style="left:45.77px;top:621.53px;font-size:13.5px;line-height:18px;color:#d8d8d8;transform:scaleX(0.9500) rotate(0.06deg);-webkit-text-stroke:0.35px #d8d8d8;">12</span>
<span class="t" style="left:45.77px;top:643.01px;font-size:13.5px;line-height:18px;color:#d8d8d8;transform:scaleX(0.9500) rotate(0.06deg);-webkit-text-stroke:0.35px #d8d8d8;">13</span>
<span class="t" style="left:45.77px;top:664.49px;font-size:13.5px;line-height:18px;color:#d8d8d8;transform:scaleX(0.9500) rotate(0.06deg);-webkit-text-stroke:0.35px #d8d8d8;">14</span>
<span class="t" style="left:45.77px;top:685.97px;font-size:13.5px;line-height:18px;color:#d8d8d8;transform:scaleX(0.9500) rotate(0.06deg);-webkit-text-stroke:0.35px #d8d8d8;">15</span>
<span class="t" style="left:116.00px;top:339.39px;font-size:13.6px;line-height:18px;color:#2c2c2c;transform:scaleX(1.0809) rotate(0.06deg);">8/19/2021</span>
<span class="t" style="left:503.00px;top:339.39px;font-size:13.6px;line-height:18px;color:#2c2c2c;transform:scaleX(1.0643) rotate(0.06deg);">Legend</span>
<div class="r" style="left:188px;top:403px;width:245px;height:258.3px;border:1px solid #a8a8a8;box-sizing:border-box"></div>
<span class="t" style="left:196.00px;top:406.69px;font-size:13.299999999999999px;line-height:17px;color:#1c1c1c;transform:scaleX(1.0485) rotate(0.06deg);font-weight:bold;">ROOM ID</span>
<span class="t" style="left:303.00px;top:406.69px;font-size:13.299999999999999px;line-height:17px;color:#1c1c1c;transform:scaleX(1.0649) rotate(0.06deg);font-weight:bold;">ROOM NAME</span>
<span class="t" style="left:214.90px;top:428.29px;font-size:13.6px;line-height:18px;color:#2c2c2c;transform:scaleX(0.9871) rotate(0.06deg);">100</span>
<span class="t" style="left:265.30px;top:428.29px;font-size:13.6px;line-height:18px;color:#4670c0;transform:scaleX(1.0689) rotate(0.06deg);text-decoration:underline;text-underline-offset:2.2px;text-decoration-thickness:1.2px;text-decoration-color:#4670c0;">Living Room</span>
<span class="t" style="left:214.90px;top:449.69px;font-size:13.6px;line-height:18px;color:#2c2c2c;transform:scaleX(0.9871) rotate(0.06deg);">200</span>
<span class="t" style="left:265.30px;top:449.69px;font-size:13.6px;line-height:18px;color:#4670c0;transform:scaleX(1.0825) rotate(0.06deg);text-decoration:underline;text-underline-offset:2.2px;text-decoration-thickness:1.2px;text-decoration-color:#4670c0;">Dining Room</span>
<span class="t" style="left:214.90px;top:471.09px;font-size:13.6px;line-height:18px;color:#2c2c2c;transform:scaleX(0.9871) rotate(0.06deg);">300</span>
<span class="t" style="left:265.30px;top:471.09px;font-size:13.6px;line-height:18px;color:#4670c0;transform:scaleX(1.1154) rotate(0.06deg);text-decoration:underline;text-underline-offset:2.2px;text-decoration-thickness:1.2px;text-decoration-color:#4670c0;">Kitchen</span>
<span class="t" style="left:214.90px;top:492.49px;font-size:13.6px;line-height:18px;color:#2c2c2c;transform:scaleX(0.9871) rotate(0.06deg);">400</span>
<span class="t" style="left:265.30px;top:492.49px;font-size:13.6px;line-height:18px;color:#4670c0;transform:scaleX(1.0649) rotate(0.06deg);text-decoration:underline;text-underline-offset:2.2px;text-decoration-thickness:1.2px;text-decoration-color:#4670c0;">Kid A Room </span>
<span class="t" style="left:214.90px;top:513.89px;font-size:13.6px;line-height:18px;color:#2c2c2c;transform:scaleX(0.9871) rotate(0.06deg);">500</span>
<span class="t" style="left:265.30px;top:513.89px;font-size:13.6px;line-height:18px;color:#4670c0;transform:scaleX(1.0405) rotate(0.06deg);text-decoration:underline;text-underline-offset:2.2px;text-decoration-thickness:1.2px;text-decoration-color:#4670c0;">Kid B Room</span>
<span class="t" style="left:214.90px;top:535.29px;font-size:13.6px;line-height:18px;color:#2c2c2c;transform:scaleX(0.9871) rotate(0.06deg);">600</span>
<span class="t" style="left:265.30px;top:535.29px;font-size:13.6px;line-height:18px;color:#4670c0;transform:scaleX(1.0920) rotate(0.06deg);text-decoration:underline;text-underline-offset:2.2px;text-decoration-thickness:1.2px;text-decoration-color:#4670c0;">Master Bedroom </span>
<span class="t" style="left:214.90px;top:556.69px;font-size:13.6px;line-height:18px;color:#2c2c2c;transform:scaleX(0.9871) rotate(0.06deg);">700</span>
<span class="t" style="left:265.30px;top:556.69px;font-size:13.6px;line-height:18px;color:#4670c0;transform:scaleX(1.0936) rotate(0.06deg);text-decoration:underline;text-underline-offset:2.2px;text-decoration-thickness:1.2px;text-decoration-color:#4670c0;">Master Bathroom </span>
<span class="t" style="left:214.90px;top:578.09px;font-size:13.6px;line-height:18px;color:#2c2c2c;transform:scaleX(0.9871) rotate(0.06deg);">800</span>
<span class="t" style="left:265.30px;top:578.09px;font-size:13.6px;line-height:18px;color:#4670c0;transform:scaleX(1.0697) rotate(0.06deg);text-decoration:underline;text-underline-offset:2.2px;text-decoration-thickness:1.2px;text-decoration-color:#4670c0;">Second Bathroom </span>
<span class="t" style="left:214.90px;top:599.49px;font-size:13.6px;line-height:18px;color:#2c2c2c;transform:scaleX(0.9871) rotate(0.06deg);">900</span>
<span class="t" style="left:265.30px;top:599.49px;font-size:13.6px;line-height:18px;color:#4670c0;transform:scaleX(1.1097) rotate(0.06deg);text-decoration:underline;text-underline-offset:2.2px;text-decoration-thickness:1.2px;text-decoration-color:#4670c0;">Outdoor/Shed/Garage</span>
<span class="t" style="left:210.50px;top:620.89px;font-size:13.6px;line-height:18px;color:#2c2c2c;transform:scaleX(0.9982) rotate(0.06deg);">1000</span>
<span class="t" style="left:265.30px;top:620.89px;font-size:13.6px;line-height:18px;color:#4670c0;transform:scaleX(1.1276) rotate(0.06deg);text-decoration:underline;text-underline-offset:2.2px;text-decoration-thickness:1.2px;text-decoration-color:#4670c0;">attic/Storage</span>
<span class="t" style="left:210.50px;top:642.29px;font-size:13.6px;line-height:18px;color:#2c2c2c;transform:scaleX(0.9982) rotate(0.06deg);">2000</span>
<span class="t" style="left:265.30px;top:642.29px;font-size:13.6px;line-height:18px;color:#4670c0;transform:scaleX(1.0556) rotate(0.06deg);text-decoration:underline;text-underline-offset:2.2px;text-decoration-thickness:1.2px;text-decoration-color:#4670c0;">Books</span>
</div>
</body></html>
